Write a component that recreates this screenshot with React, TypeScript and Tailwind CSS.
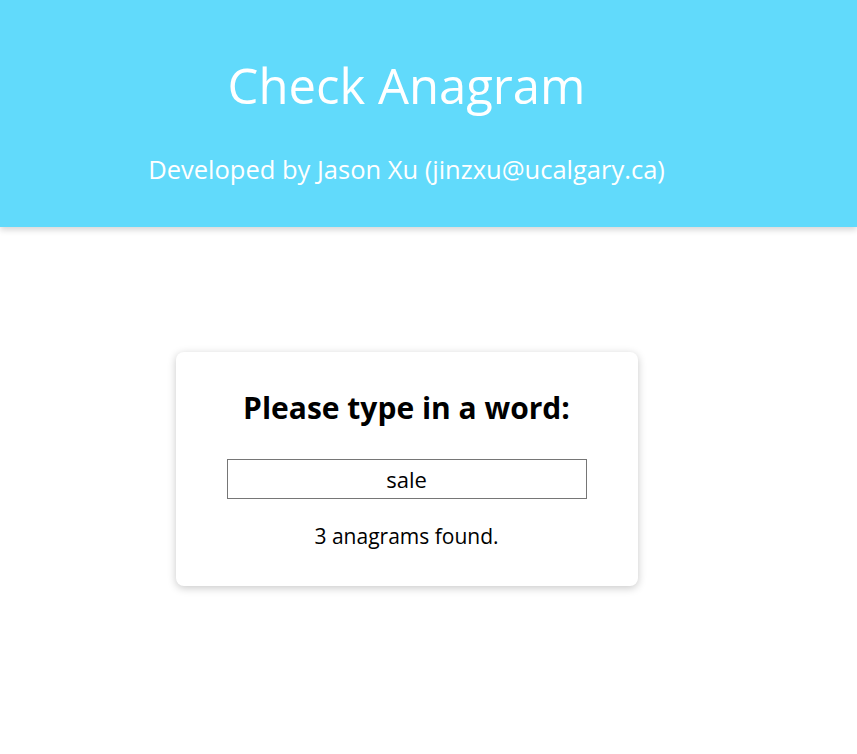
export default function App() {
  const font = { fontFamily: '"Comic Sans MS", "Open Sans", "DejaVu Sans", sans-serif' };
  return (
    <div className="min-h-[754px] bg-white" style={font}>
      <header className="h-[227px] bg-[#61dafb] shadow-[0_3px_6px_rgba(0,0,0,0.16)]">
        <div className="w-[813px] flex flex-col items-center text-white">
          <h1 className="mt-[50px] text-[49px] leading-[70px]">Check Anagram</h1>
          <p className="mt-[32px] text-[25.5px] leading-[34px]">Developed by Jason Xu (jinzxu@ucalgary.ca)</p>
        </div>
      </header>
      <main className="w-[813px] flex justify-center pt-[125px]">
        <div className="w-[462px] h-[234px] rounded-lg bg-white shadow-[0_2px_8px_rgba(0,0,0,0.22)] flex flex-col items-center">
          <h2 className="mt-[37px] text-[30px] leading-[38px] font-bold text-black">Please type in a word:</h2>
          <input
            readOnly
            value="sale"
            className="mt-[32px] w-[360px] h-[40px] border border-[#767676] text-center text-[22px] text-black outline-none"
            style={font}
          />
          <p className="mt-[23px] text-[21px] leading-[28px] text-black">3 anagrams found.</p>
        </div>
      </main>
    </div>
  );
}
